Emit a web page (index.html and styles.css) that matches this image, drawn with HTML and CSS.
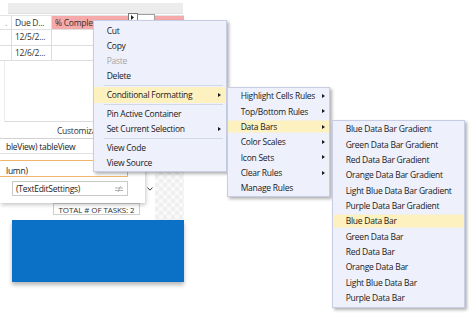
FILE: index.html
```html
<!DOCTYPE html>
<html>
<head>
<meta charset="utf-8">
<link rel="stylesheet" href="styles.css">
</head>
<body>
<div class="designer">
  <div class="toolbar"></div>
  <div class="grid">
    <div class="grid-row head">
      <div class="c-ind">.</div>
      <div class="c-due">Due D...</div>
      <div class="c-pct">% Complete</div>
      <span class="hdr-btn"><svg width="3" height="5" viewBox="0 0 3 5"><path d="M0 0 L3 2.5 L0 5 Z" fill="#222"/></svg></span>
      <span class="hdr-btn2"></span>
    </div>
    <div class="grid-row"><div class="c-ind"></div><div class="c-due">12/5/2...</div><div class="c-rest"></div></div>
    <div class="grid-row"><div class="c-ind"></div><div class="c-due">12/6/2...</div><div class="c-rest"></div></div>
  </div>
  <div class="empty"></div>
  <div class="custom-row">Customization</div>
  <div class="lower">
    <div class="popup">
      <div class="prop p1">bleView) tableView</div>
      <div class="prop p2">lumn)</div>
      <div class="prop p3"><span>(TextEditSettings)</span>
        <svg width="8" height="6" viewBox="0 0 8 6"><path d="M0 2 H8 M0 4.5 H8 M5.5 0 L3 6" stroke="#a0a0a0" stroke-width="0.8" fill="none"/></svg>
      </div>
    </div>
    <div class="chev"><svg width="6" height="4" viewBox="0 0 6 4"><path d="M0.5 0.5 L3 3.2 L5.5 0.5" stroke="#444" stroke-width="1" fill="none"/></svg></div>
    <div class="checker"></div>
    <div class="total">TOTAL # OF TASKS: 2</div>
  </div>
  <div class="blue"></div>
</div>

<div class="menu m1">
  <div class="item">Cut</div>
  <div class="item">Copy</div>
  <div class="item disabled">Paste</div>
  <div class="item">Delete</div>
  <div class="sep"></div>
  <div class="item hl">Conditional Formatting<i class="arr"></i></div>
  <div class="sep"></div>
  <div class="item">Pin Active Container</div>
  <div class="item">Set Current Selection<i class="arr"></i></div>
  <div class="sep"></div>
  <div class="item">View Code</div>
  <div class="item">View Source</div>
</div>

<div class="menu m2">
  <div class="item">Highlight Cells Rules<i class="arr"></i></div>
  <div class="item">Top/Bottom Rules<i class="arr"></i></div>
  <div class="item hl">Data Bars<i class="arr"></i></div>
  <div class="item">Color Scales<i class="arr"></i></div>
  <div class="item">Icon Sets<i class="arr"></i></div>
  <div class="item">Clear Rules<i class="arr"></i></div>
  <div class="item">Manage Rules</div>
</div>

<div class="menu m3">
  <div class="item">Blue Data Bar Gradient</div>
  <div class="item">Green Data Bar Gradient</div>
  <div class="item">Red Data Bar Gradient</div>
  <div class="item">Orange Data Bar Gradient</div>
  <div class="item">Light Blue Data Bar Gradient</div>
  <div class="item">Purple Data Bar Gradient</div>
  <div class="item hl">Blue Data Bar</div>
  <div class="item">Green Data Bar</div>
  <div class="item">Red Data Bar</div>
  <div class="item">Orange Data Bar</div>
  <div class="item">Light Blue Data Bar</div>
  <div class="item">Purple Data Bar</div>
</div>
</body>
</html>
```

FILE: styles.css
```css
html, body {
  margin: 0;
  padding: 0;
  background: #ffffff;
}
body {
  width: 474px;
  height: 317px;
  overflow: hidden;
  position: relative;
  font-family: "Open Sans", "Noto Sans", sans-serif;
  font-size: 8.5px;
  letter-spacing: -0.25px;
  color: #1a1a1a;
}

/* ---------- designer (background) ---------- */
.designer {
  width: 184px;
  display: flex;
  flex-direction: column;
}
.toolbar {
  margin: 3px 1px 1px 8px;
  height: 11px;
  background: #ececec;
  border-bottom: 1px solid #e0e0e0;
  box-sizing: border-box;
}
.grid {
  display: flex;
  flex-direction: column;
}
.grid-row {
  display: flex;
  height: 15.5px;
  border-bottom: 1px solid #dedede;
  box-sizing: border-box;
  line-height: 14px;
  color: #333;
}
.grid-row.head {
  height: 15px;
  position: relative;
  border-top: 1px solid #e2e2e2;
}
.c-ind {
  width: 12px;
  border-right: 1px solid #dcdcdc;
  box-sizing: border-box;
  color: #888;
  padding-left: 5px;
}
.c-due {
  width: 40px;
  border-right: 1px solid #dcdcdc;
  box-sizing: border-box;
  padding-left: 3px;
  white-space: nowrap;
  overflow: hidden;
}
.c-pct {
  flex: 1;
  background: #f5a9a9;
  padding-left: 3px;
  white-space: nowrap;
  overflow: hidden;
}
.c-rest { flex: 1; }
.hdr-btn {
  position: absolute;
  left: 128px;
  top: -3px;
  width: 10px;
  height: 9px;
  box-sizing: border-box;
  border: 1px solid #7a7a7a;
  background: #fff;
  display: flex;
  align-items: flex-start;
  padding: 1px 0 0 2px;
}
.hdr-btn2 {
  position: absolute;
  left: 138px;
  top: -2px;
  width: 17px;
  height: 8px;
  box-sizing: border-box;
  border: 1px solid #a0a0a0;
  border-left: none;
  background: #fff;
}
.empty {
  height: 61px;
  border-bottom: 1px solid #dcdcdc;
  border-left: 1px solid #ececec;
  margin-left: 4px;
  box-sizing: border-box;
}
.custom-row {
  height: 17px;
  line-height: 17px;
  padding-left: 57px;
  border-bottom: 1px solid #d8d8d8;
  box-sizing: border-box;
  color: #333;
  white-space: nowrap;
  overflow: hidden;
}
.lower {
  display: grid;
  grid-template-columns: 145px 10px 29px;
  grid-template-rows: 64px 17px;
}
.popup {
  grid-column: 1;
  grid-row: 1;
  background: #fff;
  box-shadow: 1px 2px 4px rgba(0, 0, 0, 0.22);
  display: flex;
  flex-direction: column;
  position: relative;
  z-index: 1;
}
.prop {
  white-space: nowrap;
  color: #222;
  box-sizing: border-box;
}
.p1 {
  height: 15px;
  line-height: 15px;
  padding-left: 6px;
  border-bottom: 1px solid #e2e2e2;
}
.p2 {
  margin-top: 6px;
  width: 128px;
  height: 17px;
  line-height: 19px;
  padding-left: 6px;
  border: 1px solid #f0b76c;
  border-left: none;
}
.p3 {
  margin: 4px 0 0 12px;
  width: 116px;
  height: 15px;
  border: 1px solid #c9c9c9;
  padding: 0 4px 0 3px;
  display: flex;
  align-items: center;
  justify-content: space-between;
}
.chev {
  grid-column: 2;
  grid-row: 1;
  align-self: end;
  margin: 0 0 12px 2px;
  display: flex;
}
.checker {
  grid-column: 3;
  grid-row: 1 / 3;
  background: repeating-conic-gradient(#efefef 0 25%, #f9f9f9 0 50%) 0 0 / 8px 8px;
}
.total {
  grid-column: 1;
  grid-row: 2;
  margin: 0 0 0 53px;
  width: 87px;
  height: 12px;
  box-sizing: border-box;
  border: 1px solid #cfcfcf;
  background: #fff;
  font-size: 8px;
  letter-spacing: -0.1px;
  line-height: 11px;
  text-align: center;
  color: #333;
  white-space: nowrap;
}
.blue {
  margin-left: 12px;
  width: 172px;
  height: 62px;
  background: #0a71c6;
  box-shadow: 0 3px 4px rgba(0, 0, 0, 0.28);
}

/* ---------- context menus ---------- */
.menu {
  position: absolute;
  background: #eef0fb;
  border: 1px solid #c7cde2;
  box-shadow: 2px 2px 3px rgba(0, 0, 0, 0.3);
  box-sizing: border-box;
  z-index: 5;
}
.item {
  height: 15.34px;
  line-height: 15.34px;
  padding: 0 0 0 12.7px;
  display: flex;
  justify-content: space-between;
  align-items: center;
  white-space: nowrap;
  color: #1a1a1a;
}
.item.disabled { color: #a6a6a6; }
.item.hl { background: #fdf1c0; }
.arr {
  width: 0;
  height: 0;
  border-left: 3px solid #1a1a1a;
  border-top: 2.5px solid transparent;
  border-bottom: 2.5px solid transparent;
}
.sep {
  height: 1px;
  background: #d3d8e8;
  margin: 1.2px 3px 1.2px 10px;
}
.m1 {
  left: 93px;
  top: 20px;
  width: 134px;
  padding: 1.5px 0 0.3px;
}
.m1 .arr { margin-right: 5px; }
.m2 {
  left: 227px;
  top: 87px;
  width: 103px;
  padding: 0.35px 0 0.3px;
}
.m2 .arr { margin-right: 4px; }
.m3 {
  left: 332px;
  top: 120px;
  width: 133px;
  padding: 0.33px 0 2px;
}
.m2 .item.hl, .m3 .item.hl {
  box-shadow: inset 0 1.5px 0 #eef0fb, inset 0 -1.5px 0 #eef0fb;
}
```
